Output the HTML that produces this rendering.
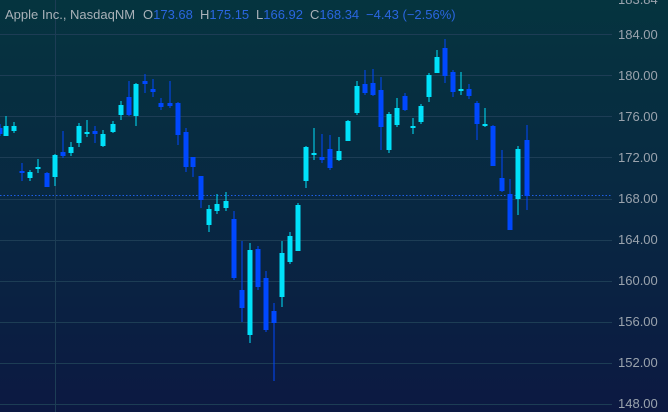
<!DOCTYPE html>
<html><head><meta charset="utf-8"><style>
html,body{margin:0;padding:0;width:668px;height:412px;overflow:hidden;background:#0a2440}
svg{display:block}
.c{fill:#00e1fa}.b{fill:#0048ff}
</style></head><body>
<svg width="668" height="412" viewBox="0 0 668 412" xmlns="http://www.w3.org/2000/svg" font-family="Liberation Sans, sans-serif">
<defs><linearGradient id="bg" x1="0" y1="0" x2="0" y2="1"><stop offset="0" stop-color="#05343f"/><stop offset="0.5" stop-color="#082842"/><stop offset="1" stop-color="#0c1942"/></linearGradient></defs>
<rect width="668" height="412" fill="url(#bg)"/>
<g stroke="#1d3d55" stroke-width="1">
<line x1="0" y1="34.5" x2="612" y2="34.5"/><line x1="0" y1="75.5" x2="612" y2="75.5"/><line x1="0" y1="116.5" x2="612" y2="116.5"/><line x1="0" y1="157.5" x2="612" y2="157.5"/><line x1="0" y1="199.5" x2="612" y2="199.5"/><line x1="0" y1="240.5" x2="612" y2="240.5"/><line x1="0" y1="281.5" x2="612" y2="281.5"/><line x1="0" y1="322.5" x2="612" y2="322.5"/><line x1="0" y1="363.5" x2="612" y2="363.5"/><line x1="0" y1="404.5" x2="612" y2="404.5"/>
<line x1="55.5" y1="0" x2="55.5" y2="412"/>
</g>
<line x1="0" y1="195.5" x2="612" y2="195.5" stroke="#1f5fe6" stroke-dasharray="1.5,2" stroke-width="1"/>
<g fill="#9aa3ad" font-size="13">
<text x="618" y="4">183.84</text>
<text x="618" y="39">184.00</text><text x="618" y="80">180.00</text><text x="618" y="121">176.00</text><text x="618" y="162">172.00</text><text x="618" y="203">168.00</text><text x="618" y="244">164.00</text><text x="618" y="285">160.00</text><text x="618" y="326">156.00</text><text x="618" y="367">152.00</text><text x="618" y="408">148.00</text>
</g>
<g font-size="13" fill="#a9b1b8">
<text x="5" y="19">Apple Inc., NasdaqNM</text>
<text x="143" y="19">O<tspan fill="#2a66e0">173.68</tspan></text>
<text x="200" y="19">H<tspan fill="#2a66e0">175.15</tspan></text>
<text x="256" y="19">L<tspan fill="#2a66e0">166.92</tspan></text>
<text x="310" y="19">C<tspan fill="#2a66e0">168.34</tspan></text>
<text x="366" y="19" fill="#2a66e0">−4.43 (−2.56%)</text>
</g>
<g>
<rect class="b" x="-0.5" y="124" width="1" height="12"/><rect class="b" x="-2.5" y="128" width="5" height="6"/>
<rect class="c" x="5.5" y="116" width="1" height="20"/><rect class="c" x="3.5" y="126" width="5" height="10"/>
<rect class="c" x="13.5" y="122" width="1" height="11"/><rect class="c" x="11.5" y="126" width="5" height="5"/>
<rect class="b" x="21.5" y="163" width="1" height="18"/><rect class="b" x="19.5" y="171" width="5" height="2"/>
<rect class="c" x="29.5" y="170" width="1" height="11"/><rect class="c" x="27.5" y="172" width="5" height="6"/>
<rect class="c" x="37.5" y="159" width="1" height="14"/><rect class="c" x="35.5" y="167" width="5" height="2"/>
<rect class="b" x="46.5" y="172" width="1" height="15"/><rect class="b" x="44.5" y="173" width="5" height="14"/>
<rect class="c" x="54.5" y="154" width="1" height="32"/><rect class="c" x="52.5" y="155" width="5" height="22"/>
<rect class="b" x="62.5" y="131" width="1" height="27"/><rect class="b" x="60.5" y="152" width="5" height="4"/>
<rect class="c" x="70.5" y="142" width="1" height="14"/><rect class="c" x="68.5" y="147" width="5" height="6"/>
<rect class="c" x="78.5" y="123" width="1" height="24"/><rect class="c" x="76.5" y="126" width="5" height="17"/>
<rect class="c" x="86.5" y="120" width="1" height="17"/><rect class="c" x="84.5" y="132" width="5" height="2"/>
<rect class="b" x="94.5" y="126" width="1" height="17"/><rect class="b" x="92.5" y="131" width="5" height="3"/>
<rect class="c" x="102.5" y="130" width="1" height="17"/><rect class="c" x="100.5" y="134" width="5" height="12"/>
<rect class="c" x="112.5" y="121" width="1" height="12"/><rect class="c" x="110.5" y="124" width="5" height="8"/>
<rect class="c" x="120.5" y="101" width="1" height="19"/><rect class="c" x="118.5" y="105" width="5" height="10"/>
<rect class="b" x="128.5" y="81" width="1" height="35"/><rect class="b" x="126.5" y="97" width="5" height="18"/>
<rect class="c" x="135.5" y="83" width="1" height="43"/><rect class="c" x="133.5" y="84" width="5" height="32"/>
<rect class="b" x="144.5" y="74" width="1" height="19"/><rect class="b" x="142.5" y="81" width="5" height="3"/>
<rect class="b" x="152.5" y="79" width="1" height="18"/><rect class="b" x="150.5" y="89" width="5" height="3"/>
<rect class="b" x="160.5" y="98" width="1" height="12"/><rect class="b" x="158.5" y="103" width="5" height="4"/>
<rect class="b" x="169.5" y="81" width="1" height="27"/><rect class="b" x="167.5" y="103" width="5" height="3"/>
<rect class="b" x="177.5" y="102" width="1" height="43"/><rect class="b" x="175.5" y="103" width="5" height="32"/>
<rect class="b" x="185.5" y="128" width="1" height="44"/><rect class="b" x="183.5" y="132" width="5" height="35"/>
<rect class="b" x="192.5" y="157" width="1" height="20"/><rect class="b" x="190.5" y="157" width="5" height="10"/>
<rect class="b" x="200.5" y="176" width="1" height="32"/><rect class="b" x="198.5" y="176" width="5" height="24"/>
<rect class="c" x="208.5" y="205" width="1" height="27"/><rect class="c" x="206.5" y="209" width="5" height="16"/>
<rect class="c" x="216.5" y="194" width="1" height="20"/><rect class="c" x="214.5" y="204" width="5" height="7"/>
<rect class="c" x="225.5" y="192" width="1" height="19"/><rect class="c" x="223.5" y="201" width="5" height="7"/>
<rect class="b" x="233.5" y="211" width="1" height="69"/><rect class="b" x="231.5" y="219" width="5" height="59"/>
<rect class="b" x="241.5" y="241" width="1" height="81"/><rect class="b" x="239.5" y="290" width="5" height="18"/>
<rect class="c" x="249.5" y="243" width="1" height="100"/><rect class="c" x="247.5" y="250" width="5" height="85"/>
<rect class="b" x="257.5" y="246" width="1" height="44"/><rect class="b" x="255.5" y="249" width="5" height="38"/>
<rect class="b" x="265.5" y="271" width="1" height="61"/><rect class="b" x="263.5" y="278" width="5" height="52"/>
<rect class="b" x="273.5" y="303" width="1" height="78"/><rect class="b" x="271.5" y="311" width="5" height="12"/>
<rect class="c" x="281.5" y="241" width="1" height="66"/><rect class="c" x="279.5" y="253" width="5" height="44"/>
<rect class="c" x="289.5" y="232" width="1" height="32"/><rect class="c" x="287.5" y="236" width="5" height="26"/>
<rect class="c" x="297.5" y="203" width="1" height="48"/><rect class="c" x="295.5" y="205" width="5" height="46"/>
<rect class="c" x="305.5" y="146" width="1" height="42"/><rect class="c" x="303.5" y="147" width="5" height="34"/>
<rect class="c" x="313.5" y="128" width="1" height="32"/><rect class="c" x="311.5" y="153" width="5" height="2"/>
<rect class="b" x="321.5" y="134" width="1" height="29"/><rect class="b" x="319.5" y="157" width="5" height="3"/>
<rect class="b" x="329.5" y="135" width="1" height="35"/><rect class="b" x="327.5" y="149" width="5" height="19"/>
<rect class="c" x="338.5" y="137" width="1" height="24"/><rect class="c" x="336.5" y="151" width="5" height="9"/>
<rect class="c" x="347.5" y="120" width="1" height="21"/><rect class="c" x="345.5" y="121" width="5" height="20"/>
<rect class="c" x="356.5" y="81" width="1" height="34"/><rect class="c" x="354.5" y="86" width="5" height="27"/>
<rect class="b" x="364.5" y="70" width="1" height="25"/><rect class="b" x="362.5" y="84" width="5" height="9"/>
<rect class="b" x="372.5" y="69" width="1" height="27"/><rect class="b" x="370.5" y="83" width="5" height="12"/>
<rect class="b" x="380.5" y="77" width="1" height="73"/><rect class="b" x="378.5" y="90" width="5" height="37"/>
<rect class="c" x="388.5" y="112" width="1" height="41"/><rect class="c" x="386.5" y="114" width="5" height="36"/>
<rect class="c" x="396.5" y="98" width="1" height="29"/><rect class="c" x="394.5" y="108" width="5" height="17"/>
<rect class="b" x="404.5" y="93" width="1" height="18"/><rect class="b" x="402.5" y="96" width="5" height="14"/>
<rect class="c" x="412.5" y="118" width="1" height="16"/><rect class="c" x="410.5" y="126" width="5" height="2"/>
<rect class="c" x="420.5" y="104" width="1" height="20"/><rect class="c" x="418.5" y="106" width="5" height="16"/>
<rect class="c" x="428.5" y="73" width="1" height="29"/><rect class="c" x="426.5" y="75" width="5" height="22"/>
<rect class="c" x="436.5" y="50" width="1" height="23"/><rect class="c" x="434.5" y="57" width="5" height="16"/>
<rect class="b" x="444.5" y="39" width="1" height="44"/><rect class="b" x="442.5" y="48" width="5" height="28"/>
<rect class="b" x="452.5" y="70" width="1" height="27"/><rect class="b" x="450.5" y="72" width="5" height="20"/>
<rect class="c" x="460.5" y="72" width="1" height="23"/><rect class="c" x="458.5" y="89" width="5" height="2"/>
<rect class="b" x="468.5" y="84" width="1" height="15"/><rect class="b" x="466.5" y="89" width="5" height="7"/>
<rect class="b" x="476.5" y="101" width="1" height="39"/><rect class="b" x="474.5" y="103" width="5" height="21"/>
<rect class="c" x="484.5" y="108" width="1" height="19"/><rect class="c" x="482.5" y="124" width="5" height="2"/>
<rect class="b" x="492.5" y="125" width="1" height="41"/><rect class="b" x="490.5" y="126" width="5" height="40"/>
<rect class="b" x="501.5" y="150" width="1" height="42"/><rect class="b" x="499.5" y="178" width="5" height="13"/>
<rect class="b" x="509.5" y="179" width="1" height="51"/><rect class="b" x="507.5" y="194" width="5" height="36"/>
<rect class="c" x="517.5" y="146" width="1" height="69"/><rect class="c" x="515.5" y="149" width="5" height="50"/>
<rect class="b" x="526.5" y="125" width="1" height="85"/><rect class="b" x="524.5" y="140" width="5" height="56"/>
</g>
</svg>
</body></html>
